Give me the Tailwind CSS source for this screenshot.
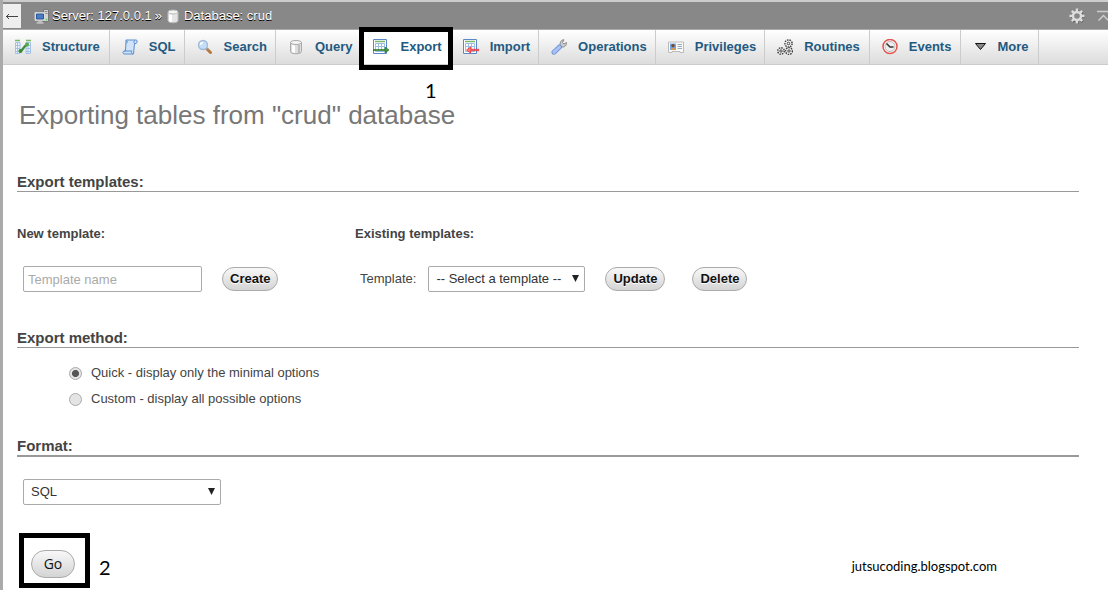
<!DOCTYPE html>
<html lang="en">
<head>
    <meta charset="UTF-8">
    <meta name="viewport" content="width=device-width, initial-scale=1.0">
    <title>Export: crud</title>
    <script src="https://cdn.jsdelivr.net/npm/@tailwindcss/browser@4"></script>
</head>
<body class="min-h-screen bg-white border-l-3 border-[#aaa] overflow-x-hidden font-['Liberation_Sans',Arial,sans-serif] text-[13px] text-[#444]">

<!-- Server bar -->
<header class="flex items-center h-[30px] bg-[#888] border-t-2 border-b border-t-[#ccc] border-b-[#aaa] text-white overflow-hidden">
    <button aria-label="Back" class="flex items-center justify-center w-[18px] h-6 bg-[#eee] text-[#444]">
        <svg class="w-[14px] h-[14px]" viewBox="0 0 14 14" fill="none" stroke="#444"><path d="M1 7.5h12M4 5L1.5 7.5L4 10"/></svg>
    </button>
    <nav class="flex items-center ml-[13px] [text-shadow:0_1px_0_#000]">
        <svg class="w-4 h-4 mr-[2px]" viewBox="0 0 16 16">
            <path d="M9.500 1.500h5v12h-5z" fill="#d4d4d4" stroke="#777"/>
            <path d="M10.500 3.500h3M10.500 5.500h3" stroke="#888"/>
            <path d="M1 4.500h10v8H1z" fill="#e6e6e6" stroke="#ccc"/>
            <path d="M2.500 6h7v5h-7z" fill="#4a7cc4" stroke="#2d5796"/>
            <path d="M4 13h4v1.500H4z" fill="#bbb"/><path d="M2.500 15h7" stroke="#ddd"/>
            <circle cx="12.500" cy="11.500" r=".8" fill="#4c4"/>
        </svg>
        <a href="#">Server: 127.0.0.1</a><span class="mx-[3px]">»</span>
        <svg class="w-4 h-4" viewBox="0 0 16 16">
            <path d="M3 4v8.500c0 3 10 3 10 0V4z" fill="#e4e4e4" stroke="#bbb"/>
            <path d="M4 6v7c1 1 2 1 3 1V7z" fill="#fff"/>
            <ellipse cx="8" cy="4" rx="5" ry="2" fill="#f4f4f4" stroke="#bbb"/>
        </svg>
        <a href="#" class="ml-[3px]">Database: crud</a>
    </nav>
    <div class="flex items-center ml-auto gap-3 -mr-[5px]">
        <button aria-label="Page settings">
            <svg class="block w-4 h-4" viewBox="0 0 16 16">
                <g stroke="#555" stroke-width="2.500" transform="translate(.6 .8)"><path d="M8 1v14M1 8h14M3 3l10 10M13 3L3 13"/></g>
                <g stroke="#ddd" stroke-width="2.400"><path d="M8 .5v15M.5 8h15M2.800 2.800l10.400 10.400M13.200 2.800L2.800 13.200"/></g>
                <circle cx="8" cy="8" r="4" fill="#888" stroke="#ddd" stroke-width="2.400"/>
            </svg>
        </button>
        <button aria-label="Collapse">
            <svg class="block w-4 h-4" viewBox="0 0 16 16" fill="none" stroke="#ccc" stroke-width="1.500"><path d="M0 3.500h13M1.500 12.500L6.500 7.500L11.500 12.500"/></svg>
        </button>
    </div>
</header>

<!-- Top menu -->
<div class="relative">
    <nav class="overflow-hidden bg-linear-to-b from-white to-[#dcdcdc] border-b border-[#ccc] font-bold text-[#235a81]">
        <ul class="flex h-[34px] pl-px *:shrink-0 *:border-r *:border-[#ccc]">
            <li><a href="#" class="flex items-center h-full gap-[11px] pl-[11px] pr-[9px]">
                <svg class="w-4 h-4" viewBox="0 0 16 16">
                    <path d="M0 1.500h5M11 1.500h5" stroke="#7cb86a" stroke-width="1.500"/>
                    <path d="M.5 3.500h4.500v11H.5zM11 3.500h4.500v11H11z" fill="#eaf2fb" stroke="#a3c1e6"/>
                    <path d="M1 6.500h4M1 9.500h4M1 12.500h4M2.500 4v10M11 6.500h4.500M11 9.500h4.500M11 12.500h4.500M13 4v10" stroke="#a3c1e6"/>
                    <path d="M5 12.500l2-1.500 3-4 2.500-1.500" fill="none" stroke="#3a8a36" stroke-width="2.200"/>
                    <circle cx="5.500" cy="12" r="2" fill="#3a8a36"/><circle cx="12" cy="5.500" r="2" fill="#58a84e"/>
                </svg>Structure</a></li>
            <li><a href="#" class="flex items-center h-full gap-[11px] pl-3 pr-2">
                <svg class="w-4 h-4" viewBox="0 0 16 16">
                    <path d="M4 1h10.500c1 1 .8 3-.5 3.500h-1.500L11.500 15H2c-1.500-.5-1.500-2.500 0-3h1.500z" fill="#d0e3fa" stroke="#5b8fd0"/>
                    <path d="M4 1c1.500.5 1.500 3 .5 3.500M12.500 4.500c-1-1-.5-3 .5-3.500M2 12h8c-1 1-.5 2.500.5 3" fill="none" stroke="#5b8fd0"/>
                </svg>SQL</a></li>
            <li><a href="#" class="flex items-center h-full gap-[11px] pl-3 pr-2">
                <svg class="w-4 h-4" viewBox="0 0 16 16">
                    <path d="M10 10L13.500 13.500" stroke="#b9773a" stroke-width="3" stroke-linecap="round"/>
                    <path d="M9.500 9l2 2" stroke="#999" stroke-width="1.500"/>
                    <circle cx="6" cy="6" r="4.500" fill="#c5def8" stroke="#9fb9d8" stroke-width="1.300"/>
                    <path d="M3.500 6c0-1.500 1-2.500 2.500-2.500" fill="none" stroke="#fff" stroke-width="1.300"/>
                </svg>Search</a></li>
            <li><a href="#" class="flex items-center h-full gap-[11px] pl-3 pr-2">
                <svg class="w-4 h-4" viewBox="0 0 16 16">
                    <path d="M2.500 3.500v9c0 3 11 3 11 0v-9z" fill="#ddd" stroke="#aaa"/>
                    <path d="M4 6v7l3 1V6.500z" fill="#fff"/><path d="M11 6v8" stroke="#bbb" stroke-width="2"/>
                    <ellipse cx="8" cy="3.500" rx="5.500" ry="2" fill="#f4f4f4" stroke="#aaa"/>
                </svg>Query</a></li>
            <li class="bg-white"><a href="#" class="flex items-center h-full gap-[11px] pl-3 pr-2">
                <svg class="w-4 h-4" viewBox="0 0 16 16">
                    <path d="M.5.500h13v14H.5z" fill="#fff" stroke="#5b88c8"/>
                    <path d="M2 2.500h10" stroke="#7cb86a" stroke-width="1.500"/>
                    <path d="M2.500 4.500h9v8h-9zM2.500 7.500h9M5.500 4.500v8M8.500 4.500v8" fill="none" stroke="#9dbce4"/>
                    <path d="M0 10.500h12V8l4 3-4 3v-2.500H0z" fill="#3f9a3a" stroke="#24701f" stroke-width=".6"/>
                </svg>Export</a></li>
            <li><a href="#" class="flex items-center h-full gap-[11px] pl-3 pr-2">
                <svg class="w-4 h-4" viewBox="0 0 16 16">
                    <path d="M.5.500h13v14H.5z" fill="#fff" stroke="#5b88c8"/>
                    <path d="M2 2.500h10" stroke="#7cb86a" stroke-width="1.500"/>
                    <path d="M2.500 4.500h9v8h-9zM2.500 7.500h9M5.500 4.500v8M8.500 4.500v8" fill="none" stroke="#9dbce4"/>
                    <path d="M16 10.300H7.500V8l-4 3 4 3v-2.300H16z" fill="#ff7a7a" stroke="#e83030" stroke-width=".8"/>
                </svg>Import</a></li>
            <li><a href="#" class="flex items-center h-full gap-[11px] pl-3 pr-2">
                <svg class="w-4 h-4" viewBox="0 0 16 16">
                    <path d="M7.500 8.500l2-2C8.500 3.500 10 .8 13 .8l-1.500 2.700 1.500 1.500 2.500-1.500c.3 3-2 5-5 4.500l-1.500 1.800z" fill="#ccc" stroke="#888"/>
                    <path d="M3 13.200L8.500 8" stroke="#7396dc" stroke-width="5" stroke-linecap="round"/>
                    <path d="M3 13.200L8.500 8" stroke="#a9c3f5" stroke-width="3" stroke-linecap="round"/>
                </svg>Operations</a></li>
            <li><a href="#" class="flex items-center h-full gap-[11px] pl-3 pr-2">
                <svg class="w-4 h-4" viewBox="0 0 16 16">
                    <path d="M.5 3h15v10.500H12v-1H4v1H.5z" fill="#fafafa" stroke="#bbb"/>
                    <path d="M2 4.500h6v6.500H2z" fill="#72a7e6"/>
                    <circle cx="5" cy="6.800" r="1.700" fill="#7a4a28"/><path d="M3 11c0-3 4-3 4 0z" fill="#e8963c"/>
                    <path d="M9.500 5.500h4.500M9.500 7.500h4.500M9.500 9.500h4.500" stroke="#9ab"/>
                </svg>Privileges</a></li>
            <li><a href="#" class="flex items-center h-full gap-[11px] pl-3 pr-[9px]">
                <svg class="w-4 h-4" viewBox="0 0 16 16" fill="#f4f4f4" stroke="#444">
                    <g stroke-width="1.500" stroke-dasharray="1.500 1"><circle cx="11.500" cy="4.500" r="3.600"/><circle cx="4" cy="12" r="3.200"/><circle cx="12" cy="12" r="3.400"/></g>
                    <circle cx="11.500" cy="4.500" r="1.300"/><circle cx="4" cy="12" r="1.200"/><circle cx="12" cy="12" r="1.200"/>
                </svg>Routines</a></li>
            <li><a href="#" class="flex items-center h-full gap-[11px] pl-3 pr-[9px]">
                <svg class="w-4 h-4" viewBox="0 0 16 16">
                    <circle cx="8" cy="7.500" r="7" fill="#fff" stroke="#e25550" stroke-width="1.500"/>
                    <circle cx="8" cy="7.500" r="5" fill="#eee" stroke="#bbb"/>
                    <path d="M4.500 4.500L8 8h3.500" fill="none" stroke="#333" stroke-width="1.500"/>
                </svg>Events</a></li>
            <li><a href="#" class="flex items-center h-full gap-2 pl-3 pr-[9px]">
                <svg class="w-4 h-4" viewBox="0 0 16 16"><path d="M2.500 4.500h10L7.500 10.500z" fill="#888" stroke="#111"/></svg>More</a></li>
        </ul>
    </nav>
    <!-- Step 1 marker over the Export tab -->
    <div class="absolute left-[356px] -top-[3px] w-[94px] h-[43px] border-5 border-black pointer-events-none"></div>
    <span class="absolute left-[422px] top-[50px] font-[Lato,sans-serif] text-xl leading-5 text-black">1</span>
</div>

<main class="pl-[14px] pr-[29px] pt-[36px]">
    <h1 class="pl-[2px] text-[26px] leading-7 text-[#777]">Exporting tables from "crud" database</h1>

    <h2 class="mt-11 text-[15px] leading-[18px] font-bold border-b border-[#999]">Export templates:</h2>
    <div class="flex flex-wrap">
        <form class="w-[338px]">
            <h3 class="mt-8 leading-5 font-bold">New template:</h3>
            <div class="flex items-center gap-5 mt-[22px] ml-[6px]">
                <input type="text" aria-label="Template name" placeholder="Template name" class="w-[179px] h-[26px] px-1 border border-[#aaa] rounded-xs placeholder:text-[#aaa]">
                <button type="button" class="h-6 px-[7px] border border-[#aaa] rounded-full bg-linear-to-b from-[#f8f8f8] to-[#d4d4d4] font-bold text-[#111] [text-shadow:0_1px_0_#fff]">Create</button>
            </div>
        </form>
        <form>
            <h3 class="mt-8 leading-5 font-bold">Existing templates:</h3>
            <div class="flex items-center mt-[22px] ml-[5px]">
                <label for="template" class="mr-3">Template:</label>
                <div class="relative mr-5">
                    <select id="template" class="block appearance-none w-[157px] h-[26px] px-[7px] border border-[#aaa] rounded-xs bg-white text-[#333]">
                        <option>-- Select a template --</option>
                    </select>
                    <svg class="absolute right-[6px] top-[9px] w-[7px] h-[7px] pointer-events-none" viewBox="0 0 7 7"><path d="M0 0h7L3.500 7z" fill="#222"/></svg>
                </div>
                <button type="button" class="h-6 px-[7px] mr-[27px] border border-[#aaa] rounded-full bg-linear-to-b from-[#f8f8f8] to-[#d4d4d4] font-bold text-[#111] [text-shadow:0_1px_0_#fff]">Update</button>
                <button type="button" class="h-6 px-[7px] border border-[#aaa] rounded-full bg-linear-to-b from-[#f8f8f8] to-[#d4d4d4] font-bold text-[#111] [text-shadow:0_1px_0_#fff]">Delete</button>
            </div>
        </form>
    </div>

    <form>
        <h2 class="mt-[37px] text-[15px] leading-[18px] font-bold border-b border-[#999]">Export method:</h2>
        <ul class="mt-3 ml-[52px]">
            <li class="flex items-center h-[26px] gap-[9px]">
                <input type="radio" name="method" id="quick" checked class="appearance-none w-[13px] h-[13px] rounded-full border border-[#aaa] bg-[#e4e4e4] checked:bg-radial checked:from-[#555] checked:from-40% checked:to-[#e4e4e4] checked:to-50%">
                <label for="quick">Quick - display only the minimal options</label>
            </li>
            <li class="flex items-center h-[26px] gap-[9px]">
                <input type="radio" name="method" id="custom" class="appearance-none w-[13px] h-[13px] rounded-full border border-[#aaa] bg-[#e4e4e4] checked:bg-radial checked:from-[#555] checked:from-40% checked:to-[#e4e4e4] checked:to-50%">
                <label for="custom">Custom - display all possible options</label>
            </li>
        </ul>

        <h2 class="mt-[25px] text-[15px] leading-[18px] font-bold border-b-2 border-[#999]"><label for="format">Format:</label></h2>
        <div class="relative w-[198px] mt-[22px] ml-[6px]">
            <select id="format" class="block appearance-none w-full h-[26px] px-[7px] border border-[#aaa] rounded-xs bg-white text-[#333]">
                <option>SQL</option>
            </select>
            <svg class="absolute right-[6px] top-[9px] w-[7px] h-[7px] pointer-events-none" viewBox="0 0 7 7"><path d="M0 0h7L3.500 7z" fill="#222"/></svg>
        </div>

        <div class="flex items-center mt-7 ml-[2px] text-black">
            <div class="w-[71px] h-[55px] pt-3 pl-[7px] border-5 border-black">
                <button type="button" class="w-11 h-7 border border-[#aaa] rounded-full bg-linear-to-b from-[#f8f8f8] to-[#d4d4d4] font-['Open_Sans',sans-serif] text-sm text-[#111]">Go</button>
            </div>
            <span class="ml-[9px] pt-3 font-[Lato,sans-serif] text-xl leading-6">2</span>
            <span class="ml-auto mr-[82px] pt-3 font-[Lato,sans-serif] text-[13px]">jutsucoding.blogspot.com</span>
        </div>
    </form>
</main>

</body>
</html>
